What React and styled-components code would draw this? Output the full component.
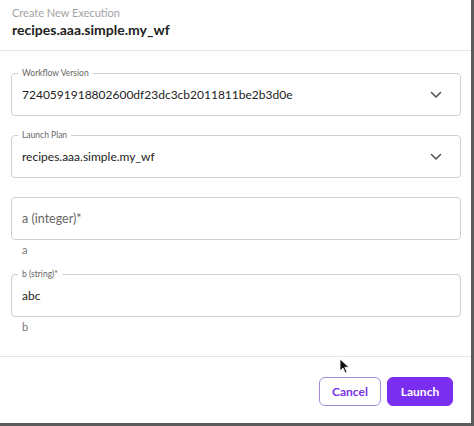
import React from 'react'
import styled, { createGlobalStyle } from 'styled-components'

const Global = createGlobalStyle`
    html, body { margin: 0; padding: 0; background: #5c5c5c; }
    body { font-family: Lato, "Open Sans", sans-serif; }
`;

const fields = [
    { label: 'Workflow Version', value: '7240591918802600df23dc3cb2011811be2b3d0e', select: true },
    { label: 'Launch Plan', value: 'recipes.aaa.simple.my_wf', select: true },
    { placeholder: 'a (integer)*', helper: 'a' },
    { label: 'b (string)*', value: 'abc', helper: 'b' },
]

function Chevron() {
    return (
        <svg width="12" height="8" viewBox="0 0 12 8">
            <path d="M1.5 1.5 L6 6 L10.5 1.5" fill="none" stroke="#555" strokeWidth="1.6" strokeLinecap="round" strokeLinejoin="round" />
        </svg>
    )
}

function Pointer() {
    return (
        <Cursor width="11" height="16" viewBox="0 0 11 16">
            <path d="M1 1 L1 13 L4 10 L6.2 15 L8 14.2 L5.8 9.3 L10 9.3 Z" fill="#111" stroke="#fff" strokeWidth="0.8" strokeLinejoin="round" />
        </Cursor>
    )
}

function App() {
    return (
        <Panel>
            <Global />
            <Header>
                <Subtitle>Create New Execution</Subtitle>
                <Title>recipes.aaa.simple.my_wf</Title>
            </Header>
            <Content>
                {fields.map((f, i) => (
                    <FieldGroup key={i} $helper={!!f.helper}>
                        <Field>
                            {f.label && <Label>{f.label}</Label>}
                            {f.value ? <Value>{f.value}</Value> : <Placeholder>{f.placeholder}</Placeholder>}
                            {f.select && <Chevron />}
                        </Field>
                        {f.helper && <Helper>{f.helper}</Helper>}
                    </FieldGroup>
                ))}
            </Content>
            <Footer>
                <Button $variant="outline">Cancel</Button>
                <Button>Launch</Button>
            </Footer>
            <Pointer />
        </Panel>
    )
}

const Panel = styled.div`
    position: relative;
    width: 471px;
    height: 423px;
    background: #fff;
    display: flex;
    flex-direction: column;
    box-sizing: border-box;
`;

const Cursor = styled.svg`
    position: absolute;
    left: 339px;
    top: 358px;
`;

const Header = styled.div`
    padding: 6px 12px 0;
    height: 51px;
    box-sizing: border-box;
    border-bottom: 1px solid #e6e6e6;
`;

const Subtitle = styled.div`
    font-size: 11px;
    line-height: 14px;
    color: #a3a3a3;
`;

const Title = styled.div`
    font-size: 14px;
    line-height: 20px;
    font-weight: 700;
    color: #222;
`;

const Content = styled.div`
    padding: 22px 10px 0 11px;
    height: 306px;
    box-sizing: border-box;
    border-bottom: 1px solid #e6e6e6;
    display: flex;
    flex-direction: column;
`;

const FieldGroup = styled.div`
    margin-bottom: ${p => (p.$helper ? '17px' : '19px')};
`;

const Field = styled.div`
    position: relative;
    height: 43px;
    border: 1px solid #cfcfcf;
    border-radius: 4px;
    box-sizing: border-box;
    display: flex;
    align-items: center;
    justify-content: space-between;
    padding: 0 18px 0 10px;
`;

const Label = styled.span`
    position: absolute;
    left: 6px;
    top: -7px;
    padding: 0 4px;
    background: #fff;
    font-size: 8.5px;
    line-height: 12px;
    color: #666;
`;

const Value = styled.span`
    font-size: 12px;
    color: #222;
`;

const Placeholder = styled.span`
    font-size: 12.5px;
    color: #666;
`;

const Helper = styled.div`
    padding: 3px 0 0 11px;
    font-size: 11px;
    line-height: 14px;
    color: #777;
`;

const Footer = styled.div`
    flex: 1;
    display: flex;
    justify-content: flex-end;
    align-items: flex-start;
    gap: 6px;
    padding: 20px 18px 0 0;
`;

const Button = styled.button`
    height: 29px;
    min-width: ${p => (p.$variant === 'outline' ? '62px' : '66px')};
    padding: 0 12px;
    border-radius: 6px;
    font-family: Lato, "Open Sans", sans-serif;
    font-size: 12px;
    font-weight: 700;
    cursor: pointer;
    border: 1px solid ${p => (p.$variant === 'outline' ? '#a58ad8' : '#7a2ef0')};
    background: ${p => (p.$variant === 'outline' ? '#fff' : '#7a2ef0')};
    color: ${p => (p.$variant === 'outline' ? '#7a33e8' : '#fff')};
`;

export default App;
